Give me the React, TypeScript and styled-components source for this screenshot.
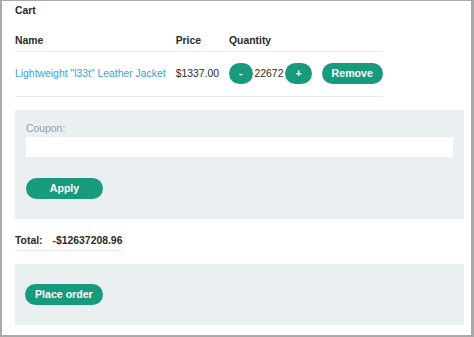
import React from "react";
import styled, { createGlobalStyle } from "styled-components";

const Global = createGlobalStyle`
  html, body { margin: 0; padding: 0; background: #fff; }
  body { font-family: "Liberation Sans", Arial, sans-serif; font-size: 10.4px; color: #2a2a2a; }
  * { box-sizing: border-box; }
`;

const Frame = styled.div`
  width: 474px;
  height: 337px;
  border-style: solid;
  border-color: #a9a9a9;
  border-width: 1px 3px 2px 2px;
  padding: 3px 7px 0 13px;
  background: #fff;
  overflow: hidden;
`;

const Title = styled.div`
  font-weight: bold;
  line-height: 14px;
`;

const Table = styled.table`
  border-collapse: collapse;
  margin-top: 12px;
`;

const Th = styled.th`
  text-align: left;
  font-weight: bold;
  height: 21px;
  padding: 0 10px 0 0;
  vertical-align: middle;
  border-bottom: 1px solid #eef0f1;
  &:last-child { padding-right: 0; }
`;

const Td = styled.td<{ $bold?: boolean; $h?: number }>`
  height: ${(p) => p.$h ?? 45}px;
  padding: 0 10px 0 0;
  vertical-align: middle;
  white-space: nowrap;
  font-weight: ${(p) => (p.$bold ? "bold" : "normal")};
  border-bottom: 1px solid #e8ebed;
  &:last-child { padding-right: 0; }
`;

const Link = styled.a`
  color: #3b9fd8;
  text-decoration: none;
`;

const Qty = styled.div`
  display: inline-flex;
  align-items: center;
  gap: 2px;
`;

const Button = styled.button<{ $wide?: boolean }>`
  font-family: inherit;
  font-size: 10.6px;
  font-weight: bold;
  color: #fff;
  background: #189a7d;
  border: none;
  border-radius: 11px;
  height: 21px;
  padding: 0 10px;
  min-width: ${(p) => (p.$wide ? "77px" : "0")};
  line-height: 21px;
  cursor: pointer;
`;

const Panel = styled.div<{ $pad: string; $mt: number }>`
  background: #eaeff2;
  margin-top: ${(p) => p.$mt}px;
  padding: ${(p) => p.$pad};
  display: flex;
  flex-direction: column;
  align-items: flex-start;
`;

const Label = styled.label`
  color: #9aa0a3;
  line-height: 14px;
`;

const Input = styled.input`
  margin-top: 1px;
  width: 100%;
  height: 20px;
  border: none;
  background: #fff;
  font-family: inherit;
  font-size: 10.4px;
  padding: 0 6px;
`;

const ApplyWrap = styled.div`
  margin-top: 21px;
`;

export default function App() {
  return (
    <>
      <Global />
      <Frame>
        <Title>Cart</Title>
        <Table>
          <thead>
            <tr>
              <Th>Name</Th>
              <Th>Price</Th>
              <Th>Quantity</Th>
              <Th></Th>
            </tr>
          </thead>
          <tbody>
            <tr>
              <Td>
                <Link href="#">Lightweight "l33t" Leather Jacket</Link>
              </Td>
              <Td>$1337.00</Td>
              <Td>
                <Qty>
                  <Button>-</Button>
                  <span>22672</span>
                  <Button>+</Button>
                </Qty>
              </Td>
              <Td>
                <Button>Remove</Button>
              </Td>
            </tr>
          </tbody>
        </Table>
        <Panel $mt={13} $pad="12px 11px 20px 11px">
          <Label>Coupon:</Label>
          <Input type="text" />
          <ApplyWrap>
            <Button $wide>Apply</Button>
          </ApplyWrap>
        </Panel>
        <Table>
          <tbody>
            <tr>
              <Td $bold $h={20}>Total:</Td>
              <Td $bold $h={20}>-$12637208.96</Td>
            </tr>
          </tbody>
        </Table>
        <Panel $mt={13} $pad="20px 10px">
          <Button $wide>Place order</Button>
        </Panel>
      </Frame>
    </>
  );
}
